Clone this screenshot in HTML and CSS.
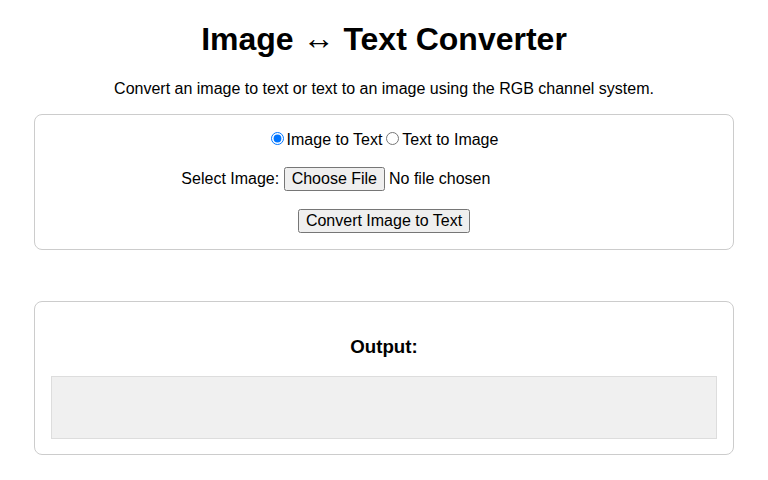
FILE: index.html
```html
<!DOCTYPE html>
<html lang="en">
<head>
<meta charset="utf-8">
<title>Image ↔ Text Converter</title>
<link rel="stylesheet" href="styles.css">
</head>
<body>
<h1 class="title">Image <span class="arrow">↔</span> Text Converter</h1>
<p class="intro">Convert an image to text or text to an image using the RGB channel system.</p>
<div class="panel">
  <div class="mode-row"><input type="radio" name="mode" id="m1" checked><label for="m1">Image to Text</label><input type="radio" name="mode" id="m2"><label for="m2">Text to Image</label></div>
  <div class="file-row"><label for="f1">Select Image:</label> <input type="file" id="f1" class="file-input"></div>
  <div class="action-row"><button class="convert-btn">Convert Image to Text</button></div>
</div>
<div class="panel panel-output">
  <h3 class="output-title">Output:</h3>
  <div class="output-box"></div>
</div>
</body>
</html>
```
FILE: styles.css
```css
body {
  margin: 0;
  padding: 0 8px;
  font-family: "Liberation Sans", Arial, sans-serif;
  color: #000;
  background: #fff;
}
.title {
  text-align: center;
  font-size: 32px;
  line-height: 37px;
  height: 37px;
  margin: 21.44px 0;
}
.arrow {
  display: inline-block;
  line-height: 1;
  vertical-align: 1px;
}
.intro {
  text-align: center;
  font-size: 16px;
  line-height: 18px;
  margin: 21.44px 0 16px;
}
.panel {
  max-width: 668px;
  margin: 0 auto;
  padding: 15px;
  border: 1px solid #ccc;
  border-radius: 8px;
  text-align: center;
}
.mode-row {
  line-height: 18px;
  margin-left: -3px;
}
.mode-row input {
  margin: 2px 3px 0 4px;
}
.file-row {
  margin-top: 18px;
}
.file-input,
.convert-btn {
  font: inherit;
  font-size: 16px;
}
.action-row {
  margin-top: 18px;
  padding-bottom: 1px;
}
.panel-output {
  max-width: 666px;
  margin-top: 51px;
  padding: 15px 16px;
}
.output-title {
  font-size: 18.72px;
  margin: 18.72px 0;
}
.output-box {
  background: #f0f0f0;
  border: 1px solid #ddd;
  padding: 10px;
  min-height: 41px;
  text-align: left;
}
```
